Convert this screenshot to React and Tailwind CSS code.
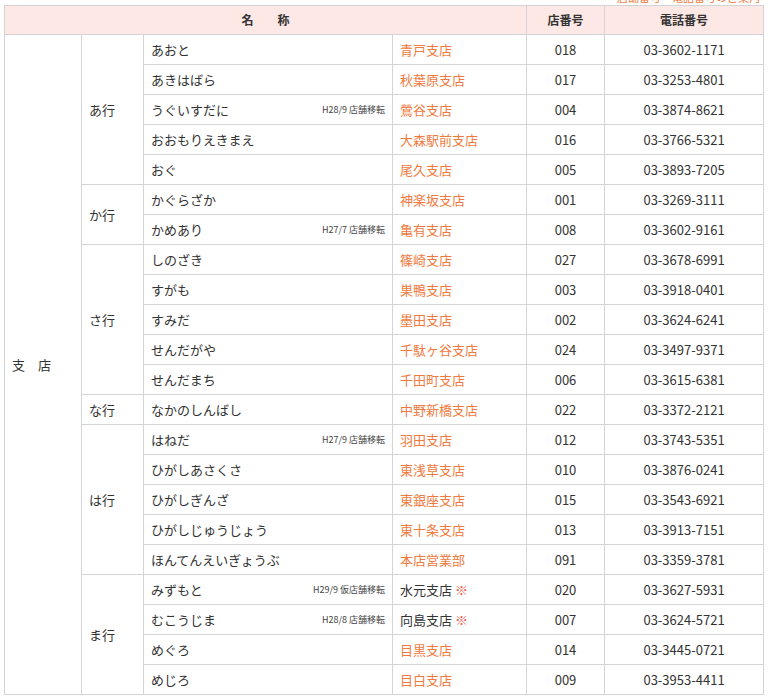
const groups = [
  ["あ行", [
    ["あおと", "", "青戸支店", "018", "03-3602-1171"],
    ["あきはばら", "", "秋葉原支店", "017", "03-3253-4801"],
    ["うぐいすだに", "H28/9 店舗移転", "鶯谷支店", "004", "03-3874-8621"],
    ["おおもりえきまえ", "", "大森駅前支店", "016", "03-3766-5321"],
    ["おぐ", "", "尾久支店", "005", "03-3893-7205"],
  ]],
  ["か行", [
    ["かぐらざか", "", "神楽坂支店", "001", "03-3269-3111"],
    ["かめあり", "H27/7 店舗移転", "亀有支店", "008", "03-3602-9161"],
  ]],
  ["さ行", [
    ["しのざき", "", "篠崎支店", "027", "03-3678-6991"],
    ["すがも", "", "巣鴨支店", "003", "03-3918-0401"],
    ["すみだ", "", "墨田支店", "002", "03-3624-6241"],
    ["せんだがや", "", "千駄ヶ谷支店", "024", "03-3497-9371"],
    ["せんだまち", "", "千田町支店", "006", "03-3615-6381"],
  ]],
  ["な行", [["なかのしんばし", "", "中野新橋支店", "022", "03-3372-2121"]]],
  ["は行", [
    ["はねだ", "H27/9 店舗移転", "羽田支店", "012", "03-3743-5351"],
    ["ひがしあさくさ", "", "東浅草支店", "010", "03-3876-0241"],
    ["ひがしぎんざ", "", "東銀座支店", "015", "03-3543-6921"],
    ["ひがしじゅうじょう", "", "東十条支店", "013", "03-3913-7151"],
    ["ほんてんえいぎょうぶ", "", "本店営業部", "091", "03-3359-3781"],
  ]],
  ["ま行", [
    ["みずもと", "H29/9 仮店舗移転", "水元支店", "020", "03-3627-5931", true],
    ["むこうじま", "H28/8 店舗移転", "向島支店", "007", "03-3624-5721", true],
    ["めぐろ", "", "目黒支店", "014", "03-3445-0721"],
    ["めじろ", "", "目白支店", "009", "03-3953-4411"],
  ]],
];

const total = groups.reduce((n, g) => n + g[1].length, 0);
const td = "border border-[#d4d4d4] h-[30px] px-[7px]";

export default function App() {
  return (
    <div className="w-[768px] h-[698px] overflow-hidden bg-white text-[#333] text-[13px]" style={{ fontFamily: '"Noto Sans CJK JP", "Liberation Sans", sans-serif' }}>
      <div className="h-[5px] relative overflow-hidden">
        <span className="absolute right-[8px] -top-[9px] text-[11px] leading-[12px] text-[#f07a3e]">店舗番号・電話番号のご案内</span>
      </div>
      <table className="ml-[4px] w-[759px] border-collapse table-fixed">
        <colgroup>
          <col className="w-[77px]" />
          <col className="w-[62px]" />
          <col className="w-[249px]" />
          <col className="w-[134px]" />
          <col className="w-[78px]" />
          <col className="w-[159px]" />
        </colgroup>
        <thead>
          <tr className="bg-[#fde8e5] font-bold text-[12px]">
            <th colSpan={4} className="border border-[#d4d4d4] h-[29px]">名　　称</th>
            <th className="border border-[#d4d4d4] h-[29px]">店番号</th>
            <th className="border border-[#d4d4d4] h-[29px]">電話番号</th>
          </tr>
        </thead>
        <tbody>
          {groups.map(([label, rows], gi) =>
            rows.map((r, i) => (
              <tr key={label + i}>
                {gi === 0 && i === 0 && (
                  <td rowSpan={total} className={td + " align-middle"}>支　店</td>
                )}
                {i === 0 && <td rowSpan={rows.length} className={td}>{label}</td>}
                <td className={td}>
                  <div className="flex items-center justify-between">
                    <span>{r[0]}</span>
                    {r[1] && <span className="text-[9px] text-[#444]">{r[1]}</span>}
                  </div>
                </td>
                <td className={td}>
                  {r[5] ? (
                    <span>{r[2]} <span className="text-[#f05a4a]">※</span></span>
                  ) : (
                    <span className="text-[#f07a3e]">{r[2]}</span>
                  )}
                </td>
                <td className={td + " text-center"}>{r[3]}</td>
                <td className={td + " text-center"}>{r[4]}</td>
              </tr>
            ))
          )}
        </tbody>
      </table>
    </div>
  );
}
